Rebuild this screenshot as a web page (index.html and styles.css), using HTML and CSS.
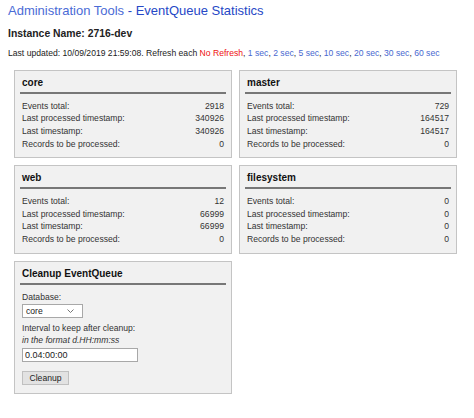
FILE: index.html
```html
<!DOCTYPE html>
<html lang="en">
<head>
    <meta charset="UTF-8">
    <title>EventQueue Statistics</title>
    <link rel="stylesheet" href="styles.css">
</head>
<body>
    <h1 class="page-title"><a href="#" class="crumb">Administration Tools</a> - EventQueue Statistics</h1>
    <p class="instance">Instance Name: 2716-dev</p>
    <p class="updated">
        Last updated: 10/09/2019 21:59:08. Refresh each
        <a href="#" class="active">No Refresh</a>,
        <a href="#">1 sec</a>, <a href="#">2 sec</a>, <a href="#">5 sec</a>, <a href="#">10 sec</a>,
        <a href="#">20 sec</a>, <a href="#">30 sec</a>, <a href="#">60 sec</a>
    </p>

    <div class="grid">
        <div class="box">
            <h2>core</h2>
            <table class="stats">
                <tr><td>Events total:</td><td class="num">2918</td></tr>
                <tr><td>Last processed timestamp:</td><td class="num">340926</td></tr>
                <tr><td>Last timestamp:</td><td class="num">340926</td></tr>
                <tr><td>Records to be processed:</td><td class="num">0</td></tr>
            </table>
        </div>
        <div class="box">
            <h2>master</h2>
            <table class="stats">
                <tr><td>Events total:</td><td class="num">729</td></tr>
                <tr><td>Last processed timestamp:</td><td class="num">164517</td></tr>
                <tr><td>Last timestamp:</td><td class="num">164517</td></tr>
                <tr><td>Records to be processed:</td><td class="num">0</td></tr>
            </table>
        </div>
        <div class="box">
            <h2>web</h2>
            <table class="stats">
                <tr><td>Events total:</td><td class="num">12</td></tr>
                <tr><td>Last processed timestamp:</td><td class="num">66999</td></tr>
                <tr><td>Last timestamp:</td><td class="num">66999</td></tr>
                <tr><td>Records to be processed:</td><td class="num">0</td></tr>
            </table>
        </div>
        <div class="box">
            <h2>filesystem</h2>
            <table class="stats">
                <tr><td>Events total:</td><td class="num">0</td></tr>
                <tr><td>Last processed timestamp:</td><td class="num">0</td></tr>
                <tr><td>Last timestamp:</td><td class="num">0</td></tr>
                <tr><td>Records to be processed:</td><td class="num">0</td></tr>
            </table>
        </div>
        <div class="box cleanup">
            <h2>Cleanup EventQueue</h2>
            <form class="cleanup-form">
                <label class="field-label">Database:</label>
                <div class="select">
                    <span>core</span>
                    <svg width="7" height="4" viewBox="0 0 7 4"><path d="M0.5 0.5 L3.5 3.5 L6.5 0.5" fill="none" stroke="#777" stroke-width="1"/></svg>
                </div>
                <label class="field-label interval">Interval to keep after cleanup:</label>
                <em class="hint">in the format d.HH:mm:ss</em>
                <input class="text-input" type="text" value="0.04:00:00">
                <button type="button" class="btn">Cleanup</button>
            </form>
        </div>
    </div>
</body>
</html>
```

FILE: styles.css
```css
body {
    margin: 0;
    padding: 2px 8px;
    font-family: "Liberation Sans", Arial, sans-serif;
    font-size: 8.6px;
    color: #222;
    background: #fff;
}

a {
    color: #4868d0;
    text-decoration: none;
}

.page-title {
    margin: 0;
    font-size: 13px;
    font-weight: normal;
    line-height: 18px;
    color: #2648c6;
}

.page-title .crumb {
    color: #4a6bd6;
}

.instance {
    margin: 7px 0 0;
    font-size: 10.4px;
    font-weight: bold;
    line-height: 13px;
}

.updated {
    margin: 7px 0 0;
    line-height: 13px;
    white-space: nowrap;
}

.updated .active {
    color: #ee1111;
}

.grid {
    display: grid;
    grid-template-columns: 218px 218px;
    gap: 7px;
    margin: 10px 0 0 6px;
    align-items: start;
}

.box {
    background: #f1f1f1;
    border: 1px solid #c4c4c4;
    padding: 5px 5px 7px;
}

.box h2 {
    margin: 0;
    padding: 0 0 2px 2px;
    font-size: 10px;
    line-height: 14px;
    color: #111;
    border-bottom: 2px solid #777;
}

.stats {
    width: 100%;
    border-collapse: collapse;
    margin-top: 5.6px;
}

.stats td {
    padding: 0 2px;
    line-height: 12.7px;
    color: #333;
}

.stats .num {
    text-align: right;
}

.cleanup {
    padding-bottom: 8px;
}

.cleanup-form {
    display: flex;
    flex-direction: column;
    align-items: flex-start;
    padding: 0 2px;
    margin-top: 6px;
}

.field-label {
    line-height: 12px;
    color: #333;
}

.select {
    margin-top: 1px;
    height: 12px;
    border: 1px solid #a8a8a8;
    background: #fff;
    display: flex;
    align-items: center;
    justify-content: space-between;
    padding: 0 8px 0 3px;
    width: 48px;
}

.interval {
    margin-top: 4px;
}

.hint {
    line-height: 12px;
    color: #333;
}

.text-input {
    margin: 2px 0 0;
    height: 14px;
    box-sizing: border-box;
    padding: 0 2px;
    border: 1px solid #a8a8a8;
    font: 9px "Liberation Sans", Arial, sans-serif;
    color: #222;
    width: 116px;
}

.btn {
    margin-top: 9px;
    width: 47px;
    height: 14px;
    padding: 0;
    border: 1px solid #c0c0c0;
    background: #e2e2e2;
    font: 8.6px "Liberation Sans", Arial, sans-serif;
    color: #222;
    line-height: 12px;
}
```
